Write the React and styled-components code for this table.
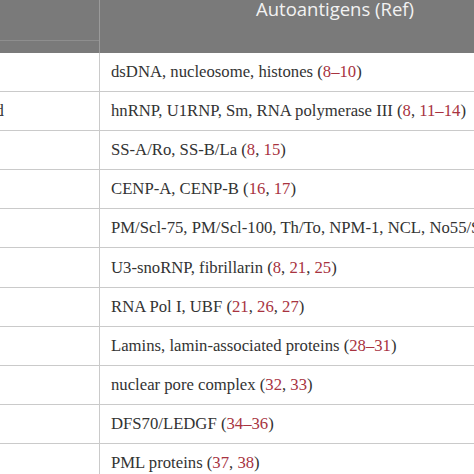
import React from "react";
import styled, { createGlobalStyle } from "styled-components";

const GlobalStyle = createGlobalStyle`
  html, body, #root {
    margin: 0;
    padding: 0;
    background: #ffffff;
  }
`;

const Viewport = styled.div`
  width: 474px;
  height: 474px;
  overflow: hidden;
  background: #ffffff;
`;

const Table = styled.div`
  display: grid;
  grid-template-columns: 220px 470px;
  margin-left: -120px;
  width: 690px;
`;

const HeadLeft = styled.div`
  height: 53px;
  background: #7a7a7a;
  border-right: 1px solid #9a9a9a;
  box-sizing: border-box;
  display: flex;
  flex-direction: column;
`;

const HeadLeftTop = styled.div`
  height: 41px;
  border-bottom: 1px solid #8e8e8e;
  box-sizing: border-box;
`;

const HeadRight = styled.div`
  height: 53px;
  background: #7a7a7a;
  display: flex;
  justify-content: center;
  align-items: flex-start;
  font-family: "Open Sans", "Liberation Sans", sans-serif;
  font-size: 18.5px;
  line-height: 17px;
  color: #f2f2f2;
  box-sizing: border-box;
`;

const Cell = styled.div`
  height: 39.1px;
  box-sizing: border-box;
  border-bottom: 1px solid #cacaca;
  border-right: ${(p) => (p.$first ? "1px solid #cacaca" : "none")};
  display: flex;
  align-items: center;
  padding-left: ${(p) => (p.$first ? "15px" : "11px")};
  font-family: "Liberation Serif", "Times New Roman", serif;
  font-size: 16.7px;
  color: #333333;
  white-space: nowrap;
  overflow: hidden;
`;

const Ref = styled.span`
  color: #a8333f;
`;

const rows = [
  ["Homogeneous", "dsDNA, nucleosome, histones", ["8–10"]],
  ["Coarse speckled", "hnRNP, U1RNP, Sm, RNA polymerase III", ["8", "11–14"]],
  ["Fine speckled", "SS-A/Ro, SS-B/La", ["8", "15"]],
  ["Centromere", "CENP-A, CENP-B", ["16", "17"]],
  ["Nucleolar", "PM/Scl-75, PM/Scl-100, Th/To, NPM-1, NCL, No55/SC65", ["18–24"]],
  ["Clumpy", "U3-snoRNP, fibrillarin", ["8", "21", "25"]],
  ["Punctate", "RNA Pol I, UBF", ["21", "26", "27"]],
  ["Smooth", "Lamins, lamin-associated proteins", ["28–31"]],
  ["Punctate", "nuclear pore complex", ["32", "33"]],
  ["Dense fine", "DFS70/LEDGF", ["34–36"]],
  ["Nuclear dots", "PML proteins", ["37", "38"]],
];

function Antigens({ text, refs }) {
  return (
    <span>
      {text + " ("}
      {refs.map((r, i) => (
        <React.Fragment key={i}>
          {i > 0 ? ", " : null}
          <Ref>{r}</Ref>
        </React.Fragment>
      ))}
      {")"}
    </span>
  );
}

export default function App() {
  return (
    <Viewport>
      <GlobalStyle />
      <Table>
        <HeadLeft>
          <HeadLeftTop />
        </HeadLeft>
        <HeadRight>Autoantigens (Ref)</HeadRight>
        {rows.map(([label, text, refs], i) => (
          <React.Fragment key={i}>
            <Cell $first>
              <span>{label}</span>
            </Cell>
            <Cell>
              <Antigens text={text} refs={refs} />
            </Cell>
          </React.Fragment>
        ))}
      </Table>
    </Viewport>
  );
}
